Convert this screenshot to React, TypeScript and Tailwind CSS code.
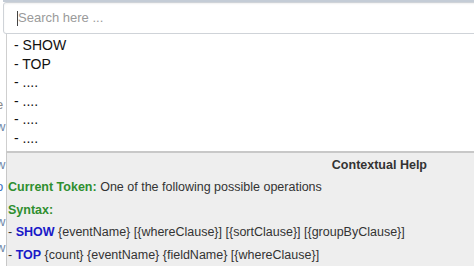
import React from "react";

const OPTIONS = ["SHOW", "TOP", "....", "....", "....", "...."];

// partial glyphs of the page that sits behind the search overlay (mt = gap above)
const BEHIND = [
  { ch: "e", cls: "text-[#8a8a8a] mt-[95px]" },
  { ch: "w", cls: "text-[#6f87a8] mt-[2px]" },
  { ch: "w", cls: "text-[#6f87a8] mt-[18px]" },
  { ch: "o", cls: "text-[#3f73c0] mt-[2px]" },
  { ch: "w", cls: "text-[#6f87a8] mt-[15px]" },
  { ch: "w", cls: "text-[#6f87a8] mt-[6px]" },
];

export default function App() {
  return (
    <div
      className="relative w-[474px] h-[266px] overflow-hidden bg-white text-[#333]"
      style={{ fontFamily: '"Liberation Sans", Arial, sans-serif' }}
    >
      {/* underlying page */}
      <div className="flex flex-col -ml-[4px] text-[13px] leading-[20px]">
        {BEHIND.map((b, i) => (
          <div key={i} className={b.cls}>
            {b.ch}
          </div>
        ))}
      </div>

      {/* search widget overlay */}
      <div className="absolute left-[3px] top-0 w-[520px] flex flex-col">
        <div className="h-[2px] bg-[#c4ccd6]" />
        <div className="h-[32px] border border-[#cfd3d8] rounded-[3px] bg-white shadow-[inset_0_1px_2px_rgba(0,0,0,0.06)] flex items-center pl-[13px]">
          <span className="w-px h-[15px] bg-[#444]" />
          <span className="text-[13px] text-[#9a9a9a] -mt-px">Search here ...</span>
        </div>
        <div className="ml-[3px] border-l border-[#cfcfcf] bg-white pl-[7px] pt-[2px] pb-[3px] text-[14px] leading-[18.6px] text-[#111]">
          {OPTIONS.map((o, i) => (
            <div key={i}>- {o}</div>
          ))}
        </div>
        <div className="ml-[3px] border-t-2 border-l border-[#c8c8c8] bg-[#eeeeee] pl-[1px] text-[12.5px] leading-[22.6px] h-[120px]">
          <div className="flex justify-end pr-[96px] pt-[1px] font-bold text-[#333]">
            Contextual Help
          </div>
          <div>
            <span className="font-bold text-[#2f8f2f]">Current Token:</span>{" "}
            One of the following possible operations
          </div>
          <div className="font-bold text-[#2f8f2f]">Syntax:</div>
          <div>
            - <span className="font-bold text-[#1a1ac8]">SHOW</span> {"{eventName} [{whereClause}] [{sortClause}] [{groupByClause}]"}
          </div>
          <div>
            - <span className="font-bold text-[#1a1ac8]">TOP</span> {"{count} {eventName} {fieldName} [{whereClause}]"}
          </div>
        </div>
      </div>
    </div>
  );
}
